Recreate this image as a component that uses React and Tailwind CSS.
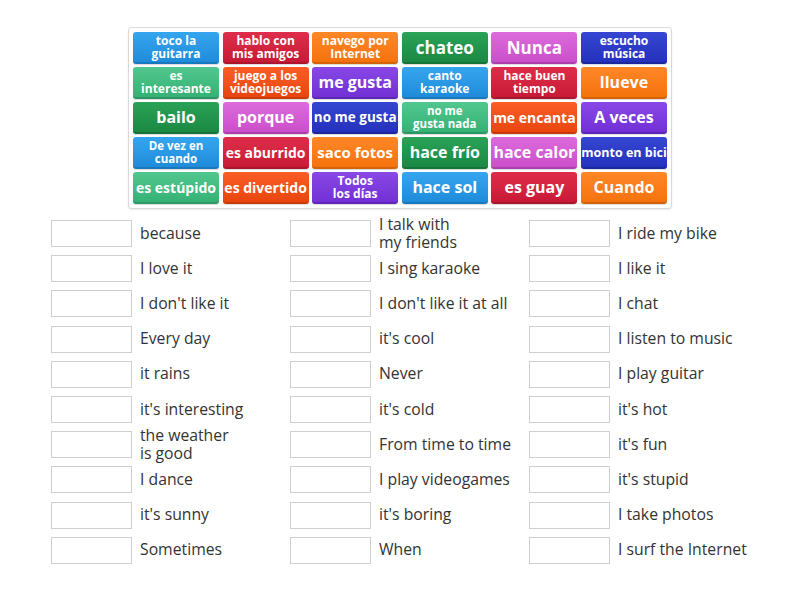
import React from 'react';

const colors = [
  'bg-linear-to-b from-[#36a5ef] to-[#1e8cda] border-[#1877bd]',
  'bg-linear-to-b from-[#de2d4a] to-[#c81a36] border-[#a8152c]',
  'bg-linear-to-b from-[#ff8726] to-[#f5730b] border-[#d46208]',
  'bg-linear-to-b from-[#2aa258] to-[#1b8943] border-[#157338]',
  'bg-linear-to-b from-[#dc6bdc] to-[#cb4fcb] border-[#ad3fad]',
  'bg-linear-to-b from-[#3746d2] to-[#2431bc] border-[#1c279e]',
  'bg-linear-to-b from-[#50c78e] to-[#36b276] border-[#2b9863]',
  'bg-linear-to-b from-[#fa5d25] to-[#e9460e] border-[#c9390a]',
  'bg-linear-to-b from-[#8947e6] to-[#7230d5] border-[#5f25b8]',
];

// [text, font size class]
const tiles = [
  ['toco la\nguitarra', 'text-[12px]'],
  ['hablo con\nmis amigos', 'text-[12px]'],
  ['navego por\nInternet', 'text-[12px]'],
  ['chateo', 'text-[17px]'],
  ['Nunca', 'text-[17px]'],
  ['escucho\nmúsica', 'text-[12px]'],
  ['es\ninteresante', 'text-[12px]'],
  ['juego a los\nvideojuegos', 'text-[12px]'],
  ['me gusta', 'text-[16px]'],
  ['canto\nkaraoke', 'text-[12px]'],
  ['hace buen\ntiempo', 'text-[12px]'],
  ['llueve', 'text-[16px]'],
  ['bailo', 'text-[16px]'],
  ['porque', 'text-[16px]'],
  ['no me gusta', 'text-[13.5px]'],
  ['no me\ngusta nada', 'text-[11.5px]'],
  ['me encanta', 'text-[14px]'],
  ['A veces', 'text-[16px]'],
  ['De vez en\ncuando', 'text-[11.5px]'],
  ['es aburrido', 'text-[14px]'],
  ['saco fotos', 'text-[15px]'],
  ['hace frío', 'text-[16px]'],
  ['hace calor', 'text-[16px]'],
  ['monto en bici', 'text-[12.5px]'],
  ['es estúpido', 'text-[14px]'],
  ['es divertido', 'text-[14px]'],
  ['Todos\nlos días', 'text-[12px]'],
  ['hace sol', 'text-[16px]'],
  ['es guay', 'text-[16px]'],
  ['Cuando', 'text-[16px]'],
];

const columns = [
  ['because', 'I love it', "I don't like it", 'Every day', 'it rains', "it's interesting", 'the weather\nis good', 'I dance', "it's sunny", 'Sometimes'],
  ['I talk with\nmy friends', 'I sing karaoke', "I don't like it at all", "it's cool", 'Never', "it's cold", 'From time to time', 'I play videogames', "it's boring", 'When'],
  ['I ride my bike', 'I like it', 'I chat', 'I listen to music', 'I play guitar', "it's hot", "it's fun", "it's stupid", 'I take photos', 'I surf the Internet'],
];

const Tile = ({ text, size, color }) => (
  <div
    className={`h-[32px] rounded-[3px] border-b-2 flex items-center justify-center text-center text-white font-bold leading-[13px] whitespace-pre-line shadow-[0_1px_1px_rgba(0,0,0,0.15)] ${size} ${color}`}
  >
    {text}
  </div>
);

const App = () => {
  return (
    <div className="w-[800px] h-[600px] bg-white overflow-hidden font-['Open_Sans',sans-serif]">
      <div className="flex justify-center pt-[27px]">
        <div className="w-[544px] border border-[#d9d9d9] rounded-[3px] p-[4px] shadow-[0_1px_2px_rgba(0,0,0,0.08)]">
          <div className="grid grid-cols-6 gap-x-[3.6px] gap-y-[3px]">
            {tiles.map(([text, size], i) => (
              <Tile key={i} text={text} size={size} color={colors[i % 9]} />
            ))}
          </div>
        </div>
      </div>

      <div className="grid grid-cols-[239px_239px_239px] pl-[51px] mt-[7px]">
        {columns.map((col, c) => (
          <div key={c} className="flex flex-col">
            {col.map((label, r) => (
              <div key={r} className="h-[35.2px] flex items-center">
                <div className="w-[81px] h-[27px] border border-[#cfcfcf] bg-white shrink-0"></div>
                <div className="ml-[8px] -mt-[2px] text-[15.75px] leading-[18px] text-[#333333] whitespace-pre-line">
                  {label}
                </div>
              </div>
            ))}
          </div>
        ))}
      </div>
    </div>
  );
};

export default App;
